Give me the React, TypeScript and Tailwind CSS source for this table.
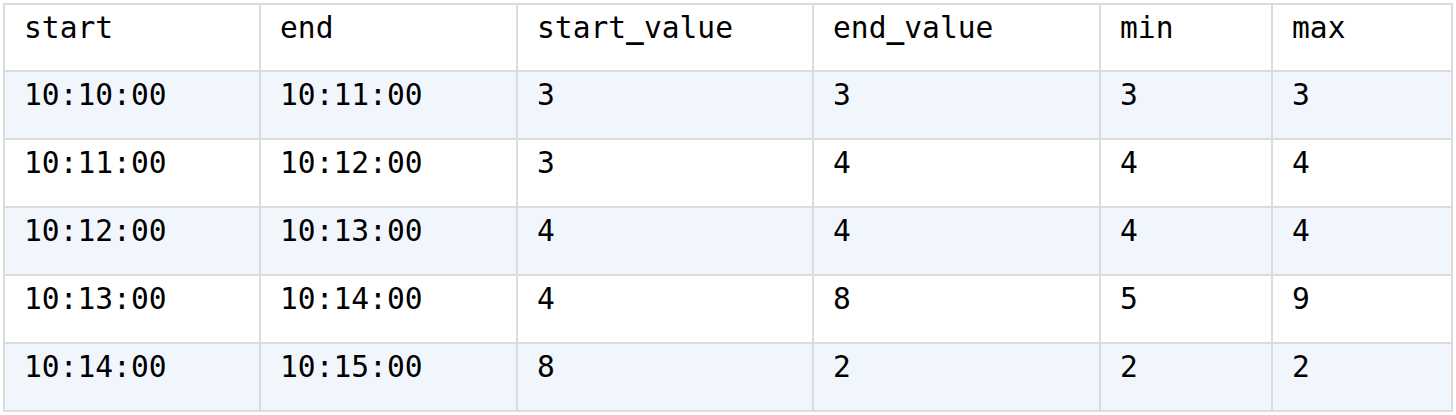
const columns = ['start', 'end', 'start_value', 'end_value', 'min', 'max']
const widths = ['w-[256px]', 'w-[257px]', 'w-[296px]', 'w-[287px]', 'w-[172px]', 'w-[180px]']

const rows = [
  ['10:10:00', '10:11:00', '3', '3', '3', '3'],
  ['10:11:00', '10:12:00', '3', '4', '4', '4'],
  ['10:12:00', '10:13:00', '4', '4', '4', '4'],
  ['10:13:00', '10:14:00', '4', '8', '5', '9'],
  ['10:14:00', '10:15:00', '8', '2', '2', '2'],
]

// the thin underscore of the mono font gets lost, so draw it a bit heavier
function Label({ text }: { text: string }) {
  const parts = text.split('_')
  return (
    <>
      {parts.map((p, i) => (
        <span key={i}>
          {i > 0 && <span className="font-bold">_</span>}
          {p}
        </span>
      ))}
    </>
  )
}

export default function App() {
  return (
    <div className="w-[1456px] h-[415px] bg-white p-[3px]">
      <table className="table-fixed border-collapse text-black font-['DejaVu_Sans_Mono',monospace] text-[29.6px] leading-[44px]">
        <thead>
          <tr className="h-[67px]">
            {columns.map((c, i) => (
              <th
                key={c}
                className={`${widths[i]} border-2 border-[#dcdcdc] px-[19px] pt-px pb-0 align-top text-left font-normal`}
              >
                <Label text={c} />
              </th>
            ))}
          </tr>
        </thead>
        <tbody>
          {rows.map((row, r) => (
            <tr key={r} className={`h-[68px] ${r % 2 === 0 ? 'bg-[#f1f5fc]' : 'bg-white'}`}>
              {row.map((v, i) => (
                <td
                  key={i}
                  className="border-2 border-[#dcdcdc] px-[19px] pt-px pb-0 align-top"
                >
                  {v}
                </td>
              ))}
            </tr>
          ))}
        </tbody>
      </table>
    </div>
  )
}
